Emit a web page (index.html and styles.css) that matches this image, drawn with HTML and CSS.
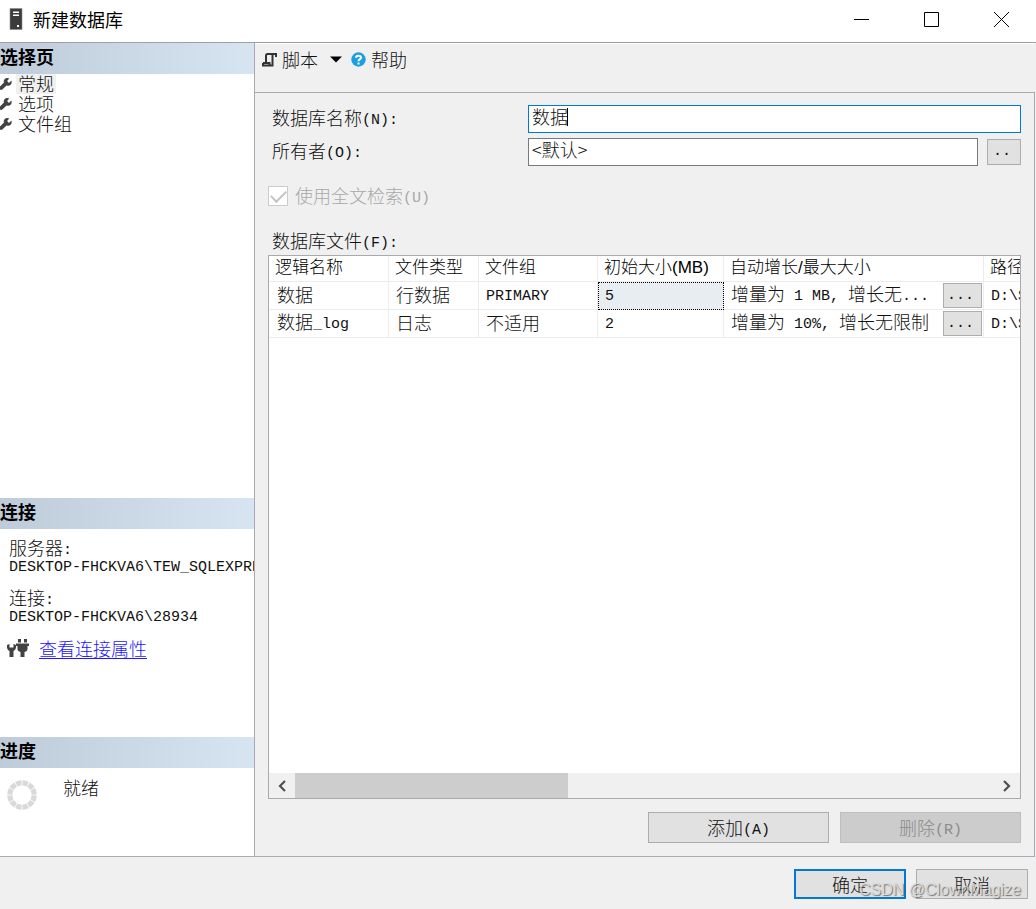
FILE: index.html
```html
<!DOCTYPE html>
<html lang="zh-CN">
<head>
<meta charset="utf-8">
<title>新建数据库</title>
<link rel="stylesheet" href="styles.css">
</head>
<body>
<div class="window">
  <header class="titlebar">
    <svg class="server-icon" width="14" height="22" viewBox="0 0 14 22" aria-hidden="true"><path fill="#3c3c3c" stroke="#8a8a8a" stroke-width=".6" d="M1 .5h12v21H1z"/><path stroke="#fff" stroke-width="1.4" d="M4 4.200h6M4 7.300h6"/><path fill="#fff" d="M8 17h2v2H8z"/></svg>
    <h1 class="title">新建数据库</h1>
    <div class="window-controls">
      <button class="control" aria-label="最小化"><svg width="15" height="15" viewBox="0 0 15 15"><path stroke="#000" d="M0 7.500h15"/></svg></button>
      <button class="control" aria-label="最大化"><svg width="15" height="15" viewBox="0 0 15 15"><path fill="none" stroke="#000" d="M.5.5h14v14H.5z"/></svg></button>
      <button class="control" aria-label="关闭"><svg width="15" height="15" viewBox="0 0 15 15"><path stroke="#000" d="M0 0l15 15M15 0L0 15"/></svg></button>
    </div>
  </header>

  <svg class="symbols" aria-hidden="true">
    <symbol id="wrench" viewBox="0 0 12 12"><path fill="#424242" d="M11.300 2.600 9 4.900 7.100 3l2.200-2.400C7.500-.3 5.200 0 4.200 1.700c-.6 1-.6 2-.2 2.900L-.2 8.600c-.9 1-.8 2.100 0 2.800.8.800 1.900.7 2.800-.2L6.600 7.500c1.500.5 3.200.1 4.200-1 1-1.200 1.100-2.600.5-3.900z"/></symbol>
  </svg>

  <div class="body">
    <aside class="sidebar">
      <section class="pages">
        <h2 class="section-title">选择页</h2>
        <ul class="page-list">
          <li><a class="page current" href="#general"><svg class="wrench" width="12" height="12"><use href="#wrench"/></svg><span class="page-name">常规</span></a></li>
          <li><a class="page" href="#options"><svg class="wrench" width="12" height="12"><use href="#wrench"/></svg><span class="page-name">选项</span></a></li>
          <li><a class="page" href="#filegroups"><svg class="wrench" width="12" height="12"><use href="#wrench"/></svg><span class="page-name">文件组</span></a></li>
        </ul>
      </section>
      <section class="connection">
        <h2 class="section-title">连接</h2>
        <dl class="facts">
          <div class="fact"><dt>服务器<span class="latin">:</span></dt><dd class="latin">DESKTOP-FHCKVA6\TEW_SQLEXPRESS</dd></div>
          <div class="fact"><dt>连接<span class="latin">:</span></dt><dd class="latin">DESKTOP-FHCKVA6\28934</dd></div>
        </dl>
        <div class="link-row">
          <svg width="22" height="20" viewBox="0 0 22 20" aria-hidden="true"><path fill="#424242" d="M0 7c-.5 3 .5 5 2.500 6v6h4v-6C8.500 12 9.500 10 9 7L6.500 6v3.500h-4V6zM11 1h3v3.500h-3zM17 1h3v3.500h-3zM9 5.500h13V8h-1.500v3c0 1.500-1 2.500-3 3v5h-4v-5c-2-.5-3-1.500-3-3V8H9z"/></svg>
          <a class="link" href="#connection">查看连接属性</a>
        </div>
      </section>
      <section class="progress">
        <h2 class="section-title">进度</h2>
        <div class="status">
          <svg width="30" height="30" viewBox="0 0 30 30" aria-hidden="true"><circle cx="15" cy="15" r="12.200" fill="none" stroke="#d9d9d9" stroke-width="5.200" pathLength="120" stroke-dasharray="8.600 1.400" stroke-dashoffset="-.7"/></svg>
          <span>就绪</span>
        </div>
      </section>
    </aside>

    <main class="main">
      <div class="toolbar">
        <button class="tool"><svg width="15" height="15" viewBox="0 0 15 15" aria-hidden="true"><path fill="none" stroke="#333" stroke-width="2" d="M14 5V2H5.500C4.500 2 4 2.500 4 4v7M1 11v2.500h9.500V2M1 11h6.500v2"/></svg>脚本<svg class="arrow" width="12" height="7" viewBox="0 0 12 7" aria-hidden="true"><path d="M0 .5h12L6 6.500z"/></svg></button>
        <button class="tool"><svg width="15" height="15" viewBox="0 0 15 15" aria-hidden="true"><circle cx="7.500" cy="7.500" r="7.200" fill="#1a9fe0"/><path fill="none" stroke="#fff" stroke-width="2" d="M5 5.700C5 3 10 3 10 5.700 10 7.300 7.500 7 7.500 9.300"/><path fill="#fff" d="M6.500 10.500h2v2h-2z"/></svg>帮助</button>
      </div>

      <div class="content">
        <div class="form">
          <label class="label" for="dbname">数据库名称<span class="latin">(N):</span></label>
          <div class="field"><input class="input focused" id="dbname" type="text" value="数据"><span class="caret"></span></div>
          <label class="label" for="owner">所有者<span class="latin">(O):</span></label>
          <div class="field with-button"><input class="input" id="owner" type="text" value="&lt;默认&gt;"><button class="button browse latin" aria-label="浏览所有者">..</button></div>
        </div>

        <label class="check"><input class="checkbox" type="checkbox" checked disabled><span>使用全文检索<span class="latin">(U)</span></span></label>

        <h3 class="files-title">数据库文件<span class="latin">(F):</span></h3>
        <div class="grid">
          <div class="grid-view">
            <table class="files">
              <colgroup><col class="c-name"><col class="c-type"><col class="c-group"><col class="c-size"><col class="c-growth"><col class="c-path"></colgroup>
              <thead><tr><th>逻辑名称</th><th>文件类型</th><th>文件组</th><th>初始大小(MB)</th><th>自动增长/最大大小</th><th>路径</th></tr></thead>
              <tbody>
                <tr><td>数据</td><td>行数据</td><td><span class="latin">PRIMARY</span></td><td class="selected"><span class="latin">5</span></td>
                  <td><div class="growth"><span>增量为<span class="latin"> 1 MB, </span>增长无<span class="latin">...</span></span><button class="button more latin" aria-label="编辑自动增长">...</button></div></td><td><span class="latin">D:\SQL</span></td></tr>
                <tr><td>数据<span class="latin">_log</span></td><td>日志</td><td>不适用</td><td><span class="latin">2</span></td>
                  <td><div class="growth"><span>增量为<span class="latin"> 10%, </span>增长无限制</span><button class="button more latin" aria-label="编辑日志自动增长">...</button></div></td><td><span class="latin">D:\SQL</span></td></tr>
              </tbody>
            </table>
          </div>
          <div class="scrollbar">
            <button class="scroll-button" aria-label="向左滚动"><svg width="10" height="12" viewBox="0 0 10 12"><path fill="none" stroke="#505050" stroke-width="2.200" d="M8 1 3 6l5 5"/></svg></button>
            <div class="track"><div class="thumb"></div></div>
            <button class="scroll-button" aria-label="向右滚动"><svg width="10" height="12" viewBox="0 0 10 12"><path fill="none" stroke="#505050" stroke-width="2.200" d="M2 1l5 5-5 5"/></svg></button>
          </div>
        </div>

        <div class="actions">
          <button class="button action">添加<span class="latin">(A)</span></button>
          <button class="button action" disabled>删除<span class="latin">(R)</span></button>
        </div>
      </div>
    </main>
  </div>

  <footer class="footer">
    <button class="button default">确定</button>
    <button class="button cancel">取消</button>
    <span class="watermark">CSDN @ClownMagize</span>
  </footer>
</div>
</body>
</html>
```
FILE: styles.css
```css
* { box-sizing: border-box; }

body {
  margin: 0;
  background: #f0f0f0;
  color: #111;
  font: 300 18px/20px "Noto Sans CJK SC", sans-serif;
}

h1, h2, h3, ul, dl, dd { margin: 0; padding: 0; }
ul { list-style: none; }
svg { display: block; flex: none; }
button, input { font: inherit; color: inherit; }
.symbols { position: absolute; width: 0; height: 0; }

.latin {
  font-family: "Liberation Mono", "Noto Sans CJK SC", monospace;
  font-size: 15px;
  white-space: pre;
}
span.latin { line-height: 1; vertical-align: 1px; }

.window { display: flex; flex-direction: column; min-height: 100vh; }

.titlebar {
  display: flex;
  align-items: center;
  height: 43px;
  padding: 0 0 4px 9px;
  background: #fff;
  border-bottom: 1px solid #a0a0a0;
}
.title { flex: 1; margin-left: 10px; font-size: 18px; font-weight: 400; line-height: 18px; color: #000; }
.window-controls { display: flex; }
.control {
  display: grid;
  place-items: center;
  width: 70px;
  height: 38px;
  padding: 0;
  border: 0;
  background: none;
}

.body { display: flex; flex: 1; }

.sidebar {
  display: flex;
  flex-direction: column;
  width: 255px;
  background: #fff;
  border-right: 1px solid #a9a9b0;
  border-bottom: 1px solid #a9a9b0;
  overflow: hidden;
}
.section-title {
  height: 31px;
  background: linear-gradient(90deg, #becbd9, #d7e4f2);
  color: #000;
  font-size: 18px;
  font-weight: 700;
  line-height: 26px;
}
.pages { flex: 1; }
.page { display: flex; align-items: center; gap: 4px; height: 20px; color: inherit; text-decoration: none; }
.page-name { padding: 0 2px 2px; line-height: 18px; }
.current .page-name { background: #f0f0f0; }

.facts { padding: 9px 0 0 9px; line-height: 18px; }
.fact { margin-bottom: 9px; }
.fact dt { height: 18px; }
.fact dd { line-height: 23px; }
.connection { height: 239px; }
.link-row { display: flex; align-items: center; gap: 10px; padding-left: 7px; }
.link { color: #2416ff; text-decoration-thickness: 1px; text-underline-offset: 2px; }

.progress { height: 119px; }
.status { display: flex; gap: 26px; padding: 9px 7px; }
.status svg { margin-top: 3px; }

.main { display: flex; flex: 1; flex-direction: column; min-width: 0; padding-right: 1px; }
.toolbar { display: flex; gap: 9px; height: 49px; padding: 5px 7px 0; border-top: 1px solid #fff; }
.tool { display: flex; align-items: center; gap: 5px; height: 20px; padding: 0; border: 0; background: none; }
.arrow { margin-left: 7px; }

.content {
  display: flex;
  flex: 1;
  flex-direction: column;
  padding: 12px 13px 13px;
  border: 1px solid #a9a9b0;
  border-left: 0;
}
.form { display: grid; grid-template-columns: 256px 1fr; gap: 5px 0; padding-left: 4px; }
.label { height: 28px; line-height: 25px; }
.field { position: relative; display: flex; }
.with-button { gap: 9px; align-items: center; }
.input {
  flex: 1;
  min-width: 0;
  height: 28px;
  padding: 0 3px 6px;
  border: 1px solid #7a7a7a;
  background: #fff;
}
.focused { border-color: #0078d7; outline: 0; }
.caret { position: absolute; top: 3px; left: 39px; width: 1px; height: 18px; background: #000; }

.button { padding: 0; border: 1px solid #adadad; background: #e1e1e1; text-align: center; }
.browse { width: 34px; height: 26px; padding-right: 4px; }

.check { display: flex; align-items: center; gap: 7px; height: 20px; margin-top: 20px; line-height: 18px; color: #a8a8a8; }
.checkbox {
  display: grid;
  place-items: center;
  width: 20px;
  height: 20px;
  margin: 0;
  appearance: none;
  border: 1px solid #ccc;
  background: #fff;
}
.checkbox::before {
  content: "";
  width: 13px;
  height: 7px;
  margin-bottom: 4px;
  border: solid #c4c4c4;
  border-width: 0 0 2px 2px;
  rotate: -45deg;
}

.files-title { height: 20px; margin: 25px 0 4px; padding-left: 4px; font-size: 18px; font-weight: 300; line-height: 18px; }

.grid { display: flex; flex: 1; flex-direction: column; border: 1px solid #a9a9b0; background: #fff; }
.grid-view { flex: 1; overflow: hidden; }
.files { width: 915px; table-layout: fixed; border-collapse: separate; border-spacing: 0; }
.c-name { width: 120px; }
.c-type { width: 90px; }
.c-group { width: 119px; }
.c-size { width: 126px; }
.c-growth { width: 260px; }
.c-path { width: 200px; }
.files th {
  height: 26px;
  padding: 0 0 2px 6px;
  border: solid #ececec;
  border-width: 0 1px 1px 0;
  color: #000;
  font: 300 17px/20px "Liberation Sans", "Noto Sans CJK SC", sans-serif;
  text-align: left;
}
.files td {
  height: 28px;
  padding: 0 0 3px 8px;
  border: solid #ececec;
  border-width: 0 1px 1px 0;
  line-height: 18px;
  vertical-align: middle;
  white-space: nowrap;
}
.files td + td { padding-left: 7px; }
.files td:nth-child(5) { padding-bottom: 0; }
.files .selected { background: #e8edf2; outline: 1px dotted #000; outline-offset: -1px; }
.growth { display: flex; align-items: center; justify-content: space-between; padding-right: 1px; }
.growth > span { padding-bottom: 3px; }
.more { width: 39px; height: 25px; padding-right: 4px; }

.scrollbar { display: flex; height: 25px; background: #f0f0f0; }
.scroll-button { display: grid; place-items: center; width: 26px; padding: 0; border: 0; background: none; }
.track { flex: 1; }
.thumb { width: 39%; height: 100%; background: #cdcdcd; }

.actions { display: flex; justify-content: flex-end; gap: 11px; margin-top: 13px; }
.action { width: 181px; height: 31px; }
.button:disabled { border-color: #bfbfbf; background: #ccc; color: #8b8b8b; }

.footer { position: relative; display: flex; justify-content: flex-end; gap: 10px; padding: 12px 8px 10px; }
.default, .cancel { width: 112px; height: 30px; }
.default { border: 2px solid #0078d7; }
.watermark {
  position: absolute;
  right: 15px;
  bottom: 9px;
  color: #d8d8d8;
  font: 16px/20px "Liberation Sans", sans-serif;
  text-shadow: 1px 1px 1px #555;
  opacity: .8;
  pointer-events: none;
}
```
